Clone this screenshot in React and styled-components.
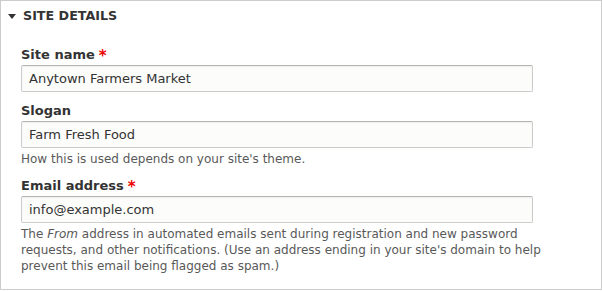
import React from 'react';
import styled, { createGlobalStyle } from 'styled-components';

const GlobalStyle = createGlobalStyle`
  html, body {
    margin: 0;
    padding: 0;
    background: #fff;
  }
  body {
    font-family: "DejaVu Sans", Verdana, sans-serif;
    color: #333;
  }
`;

const Fieldset = styled.section`
  box-sizing: border-box;
  width: 602px;
  height: 290px;
  border: 1px solid #ccc;
  background: #fff;
`;

const Legend = styled.div`
  display: flex;
  align-items: center;
  height: 29px;
  padding-left: 7px;
  font-size: 12.7px;
  font-weight: bold;
  text-transform: uppercase;
  color: #333;
`;

const Arrow = styled.span`
  width: 0;
  height: 0;
  margin-top: 1px;
  border-left: 4px solid transparent;
  border-right: 4px solid transparent;
  border-top: 5px solid #333;
  margin-right: 7px;
`;

const Body = styled.div`
  padding: 16px 20px 0 20px;
`;

const FormItem = styled.div`
  margin-top: ${p => (p.first ? 0 : '10px')};
`;

const Label = styled.label`
  display: block;
  font-size: 13px;
  font-weight: bold;
  line-height: 16px;
  padding-top: 1px;
  margin-bottom: 2px;
  color: #333;
`;

const Required = styled.span`
  color: #e00;
  font-size: 15px;
  line-height: 0;
  vertical-align: -2px;
  margin-left: 4px;
`;

const Input = styled.input`
  box-sizing: border-box;
  display: block;
  width: 512px;
  height: 27px;
  margin: 0;
  padding: 0 7px;
  border: 1px solid #ccc;
  border-top-color: #b4b4b4;
  border-radius: 2px;
  background: #fcfcfa;
  box-shadow: inset 0 1px 2px rgba(0, 0, 0, 0.06);
  font-family: "DejaVu Sans", Verdana, sans-serif;
  font-size: 13px;
  color: #333;
  outline: none;
`;

const Description = styled.div`
  margin-top: 3px;
  font-size: 12px;
  line-height: 16px;
  color: #595959;
  width: 520px;
`;

export default function App() {
  return (
    <>
      <GlobalStyle />
      <Fieldset>
        <Legend>
          <Arrow />
          Site details
        </Legend>
        <Body>
          <FormItem first>
            <Label>
              Site name<Required>*</Required>
            </Label>
            <Input defaultValue="Anytown Farmers Market" />
          </FormItem>
          <FormItem>
            <Label>Slogan</Label>
            <Input defaultValue="Farm Fresh Food" />
            <Description>How this is used depends on your site's theme.</Description>
          </FormItem>
          <FormItem>
            <Label>
              Email address<Required>*</Required>
            </Label>
            <Input defaultValue="info@example.com" />
            <Description>
              The <em>From</em> address in automated emails sent during registration and new password
              requests, and other notifications. (Use an address ending in your site's domain to help
              prevent this email being flagged as spam.)
            </Description>
          </FormItem>
        </Body>
      </Fieldset>
    </>
  );
}
